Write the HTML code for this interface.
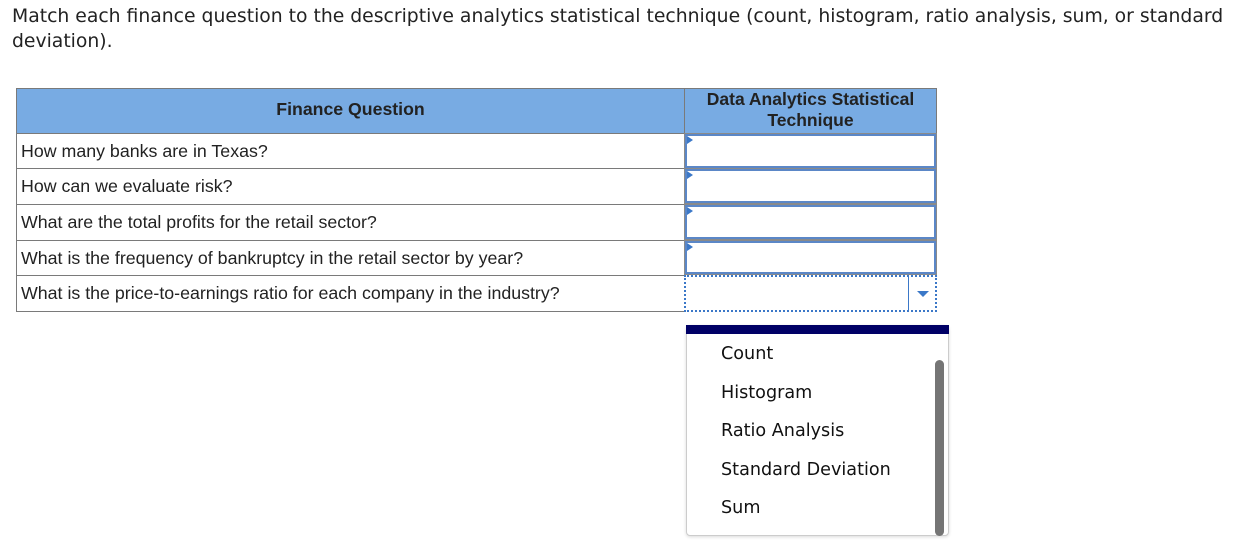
<!DOCTYPE html><html><head><style>
body{margin:0;width:1233px;height:551px;background:#fff;position:relative;overflow:hidden;font-family:"Liberation Sans",sans-serif}
.t{position:absolute;left:12px;top:4px;font-size:18.8px;line-height:25px;color:#222;font-family:"DejaVu Sans",sans-serif;white-space:nowrap}
.a{position:absolute;box-sizing:border-box}
.row{position:absolute;left:16px;width:669px;border-top:1px solid #7a7a7a;font-size:17.8px;color:#222;padding-left:5px;box-sizing:border-box;white-space:nowrap}
.cell{position:absolute;left:685px;width:251px;background:#fff;border:2px solid #5b87c7;box-sizing:border-box;outline:1px solid #8a8a8a}
.tri{position:absolute;left:0;top:0;width:0;height:0;border-top:4px solid transparent;border-bottom:4px solid transparent;border-left:6px solid #3b78c8}
.it{position:absolute;left:721px;color:#111;font-family:"DejaVu Sans",sans-serif;font-size:17.6px}
</style></head><body>
<div class="t">Match each finance question to the descriptive analytics statistical technique (count, histogram, ratio analysis, sum, or standard<br>deviation).</div>
<div class="a" style="left:16px;top:88px;width:921px;height:224px;border:1px solid #7a7a7a"></div>
<div class="a" style="left:17px;top:89px;width:919px;height:44px;background:#78abe3"></div>
<div class="a" style="left:684px;top:88px;width:1px;height:224px;background:#7a7a7a"></div>
<div class="a" style="left:17px;top:99px;width:667px;text-align:center;font-weight:bold;font-size:17.7px;color:#222">Finance Question</div>
<div class="a" style="left:685px;top:89px;width:251px;text-align:center;font-weight:bold;font-size:17.5px;line-height:21px;color:#222;white-space:nowrap">Data Analytics Statistical<br>Technique</div>
<div class="row" style="top:133px;height:35px;line-height:34px">How many banks are in Texas?</div>
<div class="row" style="top:168px;height:36px;line-height:35px">How can we evaluate risk?</div>
<div class="row" style="top:204px;height:36px;line-height:34px">What are the total profits for the retail sector?</div>
<div class="row" style="top:240px;height:35px;line-height:34px">What is the frequency of bankruptcy in the retail sector by year?</div>
<div class="row" style="top:275px;height:36px;line-height:35px">What is the price-to-earnings ratio for each company in the industry?</div>
<div class="cell" style="top:134px;height:34px"><div class="tri"></div></div>
<div class="cell" style="top:169px;height:34px"><div class="tri"></div></div>
<div class="cell" style="top:205px;height:34px"><div class="tri"></div></div>
<div class="cell" style="top:241px;height:33px"><div class="tri"></div></div>
<div class="a" style="left:684px;top:275px;width:253px;height:37px;border:2px dotted #3b78c8;background:#fff"></div>
<div class="a" style="left:908px;top:277px;width:1px;height:33px;background:#3b78c8"></div>
<div class="a" style="left:917px;top:291px;width:0;height:0;border-left:6px solid transparent;border-right:6px solid transparent;border-top:6px solid #3b78c8"></div>
<div class="a" style="left:686px;top:325px;width:263px;height:211px;border:1px solid #ccc;border-radius:4px;background:#fff;box-shadow:0 1px 3px rgba(0,0,0,.15)"></div>
<div class="a" style="left:686px;top:325px;width:263px;height:9px;background:#000066"></div>
<div class="a" style="left:935px;top:360px;width:9px;height:176px;background:#757575;border-radius:5px"></div>
<div class="it" style="top:344px">Count</div>
<div class="it" style="top:383px">Histogram</div>
<div class="it" style="top:421px">Ratio Analysis</div>
<div class="it" style="top:460px">Standard Deviation</div>
<div class="it" style="top:498px">Sum</div>
</body></html>
